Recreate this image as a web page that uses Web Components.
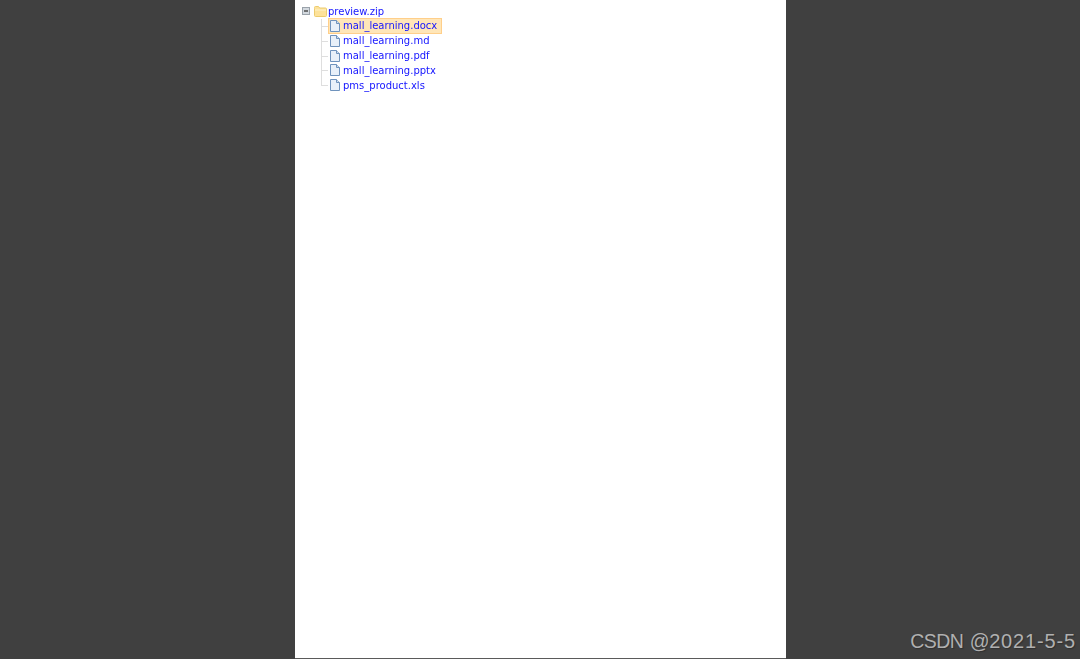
<!DOCTYPE html>
<html>
<head>
<meta charset="utf-8">
<style>
html, body { margin: 0; height: 100%; background: #404040; overflow: hidden; }
</style>
</head>
<body>
<preview-page>
  <file-tree>
    <tree-root label="preview.zip">
      <tree-leaf label="mall_learning.docx" selected></tree-leaf>
      <tree-leaf label="mall_learning.md"></tree-leaf>
      <tree-leaf label="mall_learning.pdf"></tree-leaf>
      <tree-leaf label="mall_learning.pptx"></tree-leaf>
      <tree-leaf label="pms_product.xls" last></tree-leaf>
    </tree-root>
  </file-tree>
</preview-page>
<script>
class PreviewPage extends HTMLElement {
  constructor() {
    super();
    this.attachShadow({mode: "open"}).innerHTML = `<style>
:host { display: flex; justify-content: center; height: 659px; position: relative; box-sizing: border-box; padding-left: 1px; }
.sheet { width: 491px; height: 658px; background: #fff; border-bottom: 1px solid #5a5a5a; }
.mark { position: absolute; right: 4px; bottom: 6px; font: 19.5px "Liberation Sans", sans-serif; letter-spacing: -.5px; word-spacing: 1.5px; color: #b0b0b0; text-shadow: 1px 1px 1px #303030; }
.mark span { font-size: 20px; letter-spacing: .85px; }
</style>
<div class="sheet"><slot></slot></div>
<div class="mark">CSDN @<span>2021-5-5</span></div>`;
  }
}

class FileTree extends HTMLElement {
  constructor() {
    super();
    this.attachShadow({mode: "open"}).innerHTML = `<style>
:host { display: block; padding: 4px 0 0 7px; font: 10px "DejaVu Sans", sans-serif; color: #1414ff; filter: blur(.35px); }
</style><slot></slot>`;
  }
}

class TreeRoot extends HTMLElement {
  constructor() {
    super();
    this.attachShadow({mode: "open"}).innerHTML = `<style>
:host { display: block; }
.row { display: flex; align-items: center; height: 14.5px; }
.switch { width: 8px; height: 8px; margin-right: 4px; }
.folder { width: 13px; height: 11px; margin-right: 1px; }
.kids { margin-left: 19px; }
</style>
<div class="row">
  <svg class="switch" viewBox="0 0 8 8"><rect x=".5" y=".5" width="7" height="7" fill="#d3d9df" stroke="#9aa2aa"/><path d="M2 4h4" stroke="#444" stroke-width="1.4"/></svg>
  <svg class="folder" viewBox="0 0 13 11"><path d="M.5 2.5V1.5q0-1 1-1h3l1.2 1.5H11.5q1 0 1 1v6.5q0 1-1 1h-10q-1 0-1-1z" fill="#fde29a" stroke="#eccb6e"/><path d="M1 4h11" stroke="#fff3c8"/></svg>
  <span id="label"></span>
</div>
<div class="kids"><slot></slot></div>`;
    this.shadowRoot.getElementById("label").textContent = this.getAttribute("label");
  }
}

class TreeLeaf extends HTMLElement {
  constructor() {
    super();
    this.attachShadow({mode: "open"}).innerHTML = `<style>
:host { display: flex; align-items: center; height: 14.85px; }
.branch { width: 7px; height: 100%; box-sizing: border-box; position: relative; }
.branch::before { content: ""; position: absolute; left: 0; top: 0; bottom: 0; border-left: 1px solid #dedede; }
.branch::after { content: ""; position: absolute; left: 0; right: 0; top: 50%; border-top: 1px solid #dedede; }
:host([last]) .branch::before { bottom: 50%; }
.node { display: flex; align-items: center; height: 16px; padding: 0 4px 0 1px; border: 1px solid transparent; box-sizing: border-box; }
:host([selected]) .node { background: #ffe6b8; border-color: #ffcf8a; }
.doc { width: 10px; height: 12px; margin-right: 3px; }
</style>
<div class="branch"></div>
<div class="node">
  <svg class="doc" viewBox="0 0 10 12"><path d="M.5.5H6.5L9.5 3.5V11.5H.5z" fill="#e8f0f9" stroke="#6f93bd"/><path d="M6.5.5V3.5H9.5" fill="#cfdeef" stroke="#6f93bd"/></svg>
  <span id="label"></span>
</div>`;
    this.shadowRoot.getElementById("label").textContent = this.getAttribute("label");
  }
}

customElements.define("preview-page", PreviewPage);
customElements.define("file-tree", FileTree);
customElements.define("tree-root", TreeRoot);
customElements.define("tree-leaf", TreeLeaf);
</script>
</body>
</html>
